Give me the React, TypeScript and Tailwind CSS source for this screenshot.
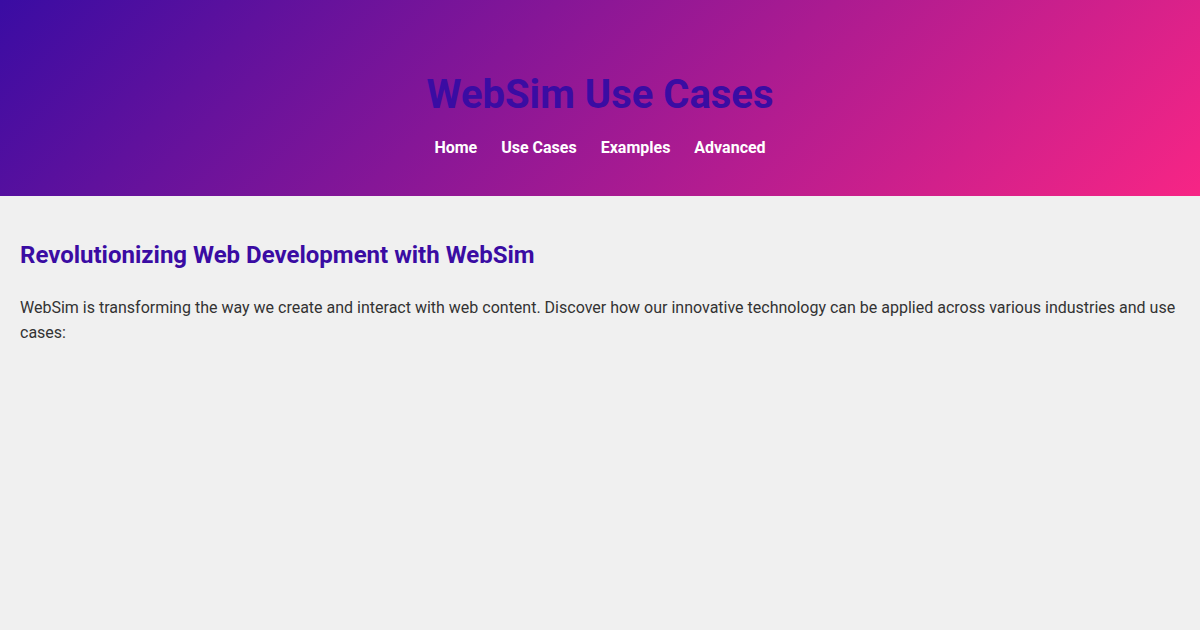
const links = ['Home', 'Use Cases', 'Examples', 'Advanced'];

export default function App() {
    return (
        <div className="min-h-screen bg-[#f0f0f0] font-['Roboto',sans-serif]">
            <header className="bg-[linear-gradient(135deg,#3a0ca3,#f72585)] pt-[71px] pb-[36px] text-center">
                <h1 className="text-[40px] font-bold leading-[48px] text-[#3a0ca3]">WebSim Use Cases</h1>
                <nav className="mt-[17px] flex justify-center gap-6">
                    {links.map((l) => (
                        <a key={l} href="#" className="text-base font-bold leading-6 text-white">
                            {l}
                        </a>
                    ))}
                </nav>
            </header>
            <main className="px-5 pt-[43px]">
                <h2 className="text-2xl font-bold leading-8 text-[#3a0ca3]">
                    Revolutionizing Web Development with WebSim
                </h2>
                <p className="mt-[24px] text-base leading-[25px] text-[#333]">
                    WebSim is transforming the way we create and interact with web content. Discover how our innovative
                    technology can be applied across various industries and use cases:
                </p>
            </main>
        </div>
    );
}
